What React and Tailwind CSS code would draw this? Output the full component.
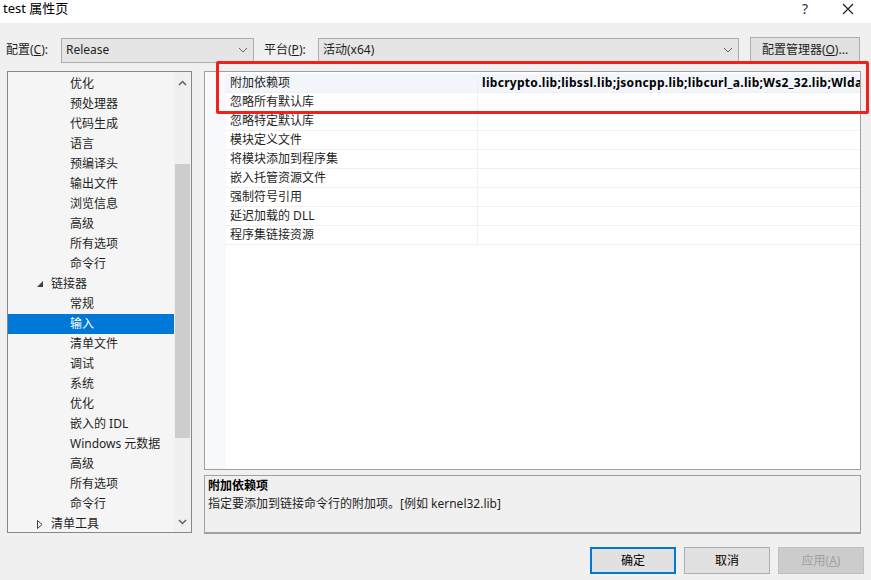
import React from "react";

const treeItems = [
  { t: "优化", l: 2 },
  { t: "预处理器", l: 2 },
  { t: "代码生成", l: 2 },
  { t: "语言", l: 2 },
  { t: "预编译头", l: 2 },
  { t: "输出文件", l: 2 },
  { t: "浏览信息", l: 2 },
  { t: "高级", l: 2 },
  { t: "所有选项", l: 2 },
  { t: "命令行", l: 2 },
  { t: "链接器", l: 1, open: true },
  { t: "常规", l: 2 },
  { t: "输入", l: 2, sel: true },
  { t: "清单文件", l: 2 },
  { t: "调试", l: 2 },
  { t: "系统", l: 2 },
  { t: "优化", l: 2 },
  { t: "嵌入的 IDL", l: 2 },
  { t: "Windows 元数据", l: 2 },
  { t: "高级", l: 2 },
  { t: "所有选项", l: 2 },
  { t: "命令行", l: 2 },
  { t: "清单工具", l: 1, open: false },
];

const props = [
  { n: "附加依赖项", v: "libcrypto.lib;libssl.lib;jsoncpp.lib;libcurl_a.lib;Ws2_32.lib;Wldap32.lib;Crypt32.lib", hl: true },
  { n: "忽略所有默认库" },
  { n: "忽略特定默认库" },
  { n: "模块定义文件" },
  { n: "将模块添加到程序集" },
  { n: "嵌入托管资源文件" },
  { n: "强制符号引用" },
  { n: "延迟加载的 DLL" },
  { n: "程序集链接资源" },
];

function Chevron() {
  return (
    <svg width="10" height="6" viewBox="0 0 10 6">
      <path d="M1 1 L5 5 L9 1" fill="none" stroke="#606060" strokeWidth="1" />
    </svg>
  );
}

function Dropdown({ value, width }) {
  return (
    <div className={`${width} h-[25px] bg-[#e5e5e5] border border-[#adadad] flex items-center justify-between pl-[4px] pr-[5px]`}>
      <span>{value}</span>
      <Chevron />
    </div>
  );
}

function Tree() {
  return (
    <div className="w-[185px] h-[462px] border border-[#828790] bg-[#f5f5f5] flex overflow-hidden">
      <div className="w-[166px] pt-[2px] overflow-hidden">
        {treeItems.map((it, i) => (
          <div
            key={i}
            className={`h-[20px] flex items-center whitespace-nowrap ${it.sel ? "bg-[#0078d7] text-white" : "text-[#1e1e1e]"} ${it.l === 1 ? "pl-[29px]" : "pl-[62px]"}`}
          >
            {it.l === 1 && (
              <span className="w-[14px] flex items-center">
                {it.open ? (
                  <svg width="6" height="6" viewBox="0 0 6 6">
                    <path d="M6 0 L6 6 L0 6 Z" fill="#404040" />
                  </svg>
                ) : (
                  <svg width="6" height="9" viewBox="0 0 6 9">
                    <path d="M0.5 0.5 L5 4.5 L0.5 8.5 Z" fill="none" stroke="#404040" strokeWidth="1" />
                  </svg>
                )}
              </span>
            )}
            {it.t}
          </div>
        ))}
      </div>
      <div className="w-[17px] bg-[#f0f0f0] flex flex-col items-center">
        <div className="h-[20px] flex items-center pt-[2px]">
          <svg width="9" height="6" viewBox="0 0 9 6">
            <path d="M1 5 L4.5 1.5 L8 5" fill="none" stroke="#606060" strokeWidth="1.5" />
          </svg>
        </div>
        <div className="mt-[72px] w-[15px] h-[274px] bg-[#cdcdcd]" />
        <div className="flex-1" />
        <div className="h-[20px] flex items-center">
          <svg width="9" height="6" viewBox="0 0 9 6">
            <path d="M1 1 L4.5 4.5 L8 1" fill="none" stroke="#606060" strokeWidth="1.5" />
          </svg>
        </div>
      </div>
    </div>
  );
}

function Grid() {
  return (
    <div className="w-[657px] h-[399px] border border-[#a0a0a0] bg-white flex overflow-hidden">
      <div className="w-[21px] bg-[#f7f9fc]" />
      <div className="flex-1 min-w-0 pt-[2px] overflow-hidden">
        {props.map((p, i) => (
          <div key={i} className={`h-[19px] flex border-b border-[#f0f0f0] ${p.hl ? "bg-[#f2f5fa]" : ""}`}>
            <div className="w-[252px] shrink-0 pl-[4px] flex items-center border-r border-[#f0f0f0] whitespace-nowrap">{p.n}</div>
            <div className="flex-1 min-w-0 pl-[4px] flex items-center whitespace-nowrap overflow-hidden font-bold text-black tracking-[0.3px]">
              {p.v || ""}
            </div>
          </div>
        ))}
      </div>
    </div>
  );
}

function Button({ children, primary, disabled }) {
  return (
    <div
      className={`w-[86px] h-[27px] flex items-center justify-center ${
        primary
          ? "border-2 border-[#0078d7] bg-[#e1e1e1] text-black"
          : disabled
          ? "border border-[#bfbfbf] bg-[#cccccc] text-[#a0a0a0]"
          : "border border-[#adadad] bg-[#e1e1e1] text-black"
      }`}
    >
      {children}
    </div>
  );
}

export default function App() {
  return (
    <div
      className="relative w-[871px] h-[580px] bg-[#f0f0f0] text-[12px] text-[#1e1e1e] overflow-hidden flex flex-col"
      style={{ fontFamily: '"Noto Sans", "Noto Sans CJK SC", sans-serif' }}
    >
      {/* title bar */}
      <div className="h-[23px] bg-white flex items-center justify-between pl-[3px] pb-[6px]">
        <span className="text-[13px] text-black leading-[17px]">test 属性页</span>
        <div className="flex items-center">
          <span className="text-[14px] leading-[17px] text-[#333] mr-[34px]">?</span>
          <svg width="12" height="12" viewBox="0 0 12 12" className="mr-[17px]">
            <path d="M1 1 L11 11 M11 1 L1 11" stroke="#222" strokeWidth="1.2" />
          </svg>
        </div>
      </div>

      {/* config row */}
      <div className="mt-[14px] h-[26px] flex items-center pl-[6px]">
        <span className="w-[55px]">配置(<u>C</u>):</span>
        <Dropdown value="Release" width="w-[193px]" />
        <span className="ml-[10px] w-[54px]">平台(<u>P</u>):</span>
        <Dropdown value="活动(x64)" width="w-[421px]" />
        <div className="ml-[11px] w-[110px] h-[26px] bg-[#e1e1e1] border border-[#adadad] flex items-center justify-center">
          配置管理器(<u>O</u>)...
        </div>
      </div>

      {/* main */}
      <div className="mt-[8px] flex pl-[7px]">
        <Tree />
        <div className="ml-[12px] flex flex-col">
          <Grid />
          <div className="mt-[5px] w-[657px] h-[59px] bg-[#f0f0f0] border border-[#a0a0a0] border-b-2 pl-[3px] pt-[1px] leading-[18px]">
            <div className="font-bold text-black">附加依赖项</div>
            <div>指定要添加到链接命令行的附加项。[例如 kernel32.lib]</div>
          </div>
        </div>
      </div>

      {/* buttons */}
      <div className="mt-[13px] flex justify-end gap-[8px] pr-[7px]">
        <Button primary>确定</Button>
        <Button>取消</Button>
        <Button disabled>应用(<u>A</u>)</Button>
      </div>

      {/* red annotation */}
      <div className="absolute left-[216px] top-[61px] w-[653px] h-[53px] border-[3px] border-[#f0201a] rounded-[2px] pointer-events-none" />
    </div>
  );
}
